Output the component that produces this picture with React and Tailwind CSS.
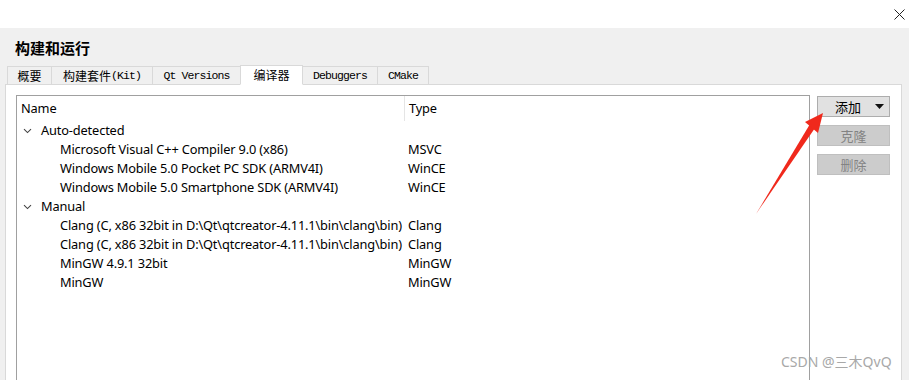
import React from 'react';

const ui = { fontFamily: '"Noto Sans", "Noto Sans CJK SC", sans-serif' };
const cjk = { fontFamily: '"Noto Sans CJK SC", sans-serif' };
const mono = { fontFamily: '"Liberation Mono", "Noto Sans CJK SC", monospace' };

const tabs = [
  { label: [['cjk', '概要']], w: 'w-[45px]' },
  { label: [['cjk', '构建套件'], ['mono', '(Kit)']], w: 'w-[102px]' },
  { label: [['mono', 'Qt Versions']], w: 'w-[89px]' },
  { label: [['cjk', '编译器']], w: 'w-[63px]', active: true },
  { label: [['mono', 'Debuggers']], w: 'w-[76px]' },
  { label: [['mono', 'CMake']], w: 'w-[52px]' },
];

const groups = [
  {
    name: 'Auto-detected',
    items: [
      ['Microsoft Visual C++ Compiler 9.0 (x86)', 'MSVC'],
      ['Windows Mobile 5.0 Pocket PC SDK (ARMV4I)', 'WinCE'],
      ['Windows Mobile 5.0 Smartphone SDK (ARMV4I)', 'WinCE'],
    ],
  },
  {
    name: 'Manual',
    items: [
      ['Clang (C, x86 32bit in D:\\Qt\\qtcreator-4.11.1\\bin\\clang\\bin)', 'Clang'],
      ['Clang (C, x86 32bit in D:\\Qt\\qtcreator-4.11.1\\bin\\clang\\bin)', 'Clang'],
      ['MinGW 4.9.1 32bit', 'MinGW'],
      ['MinGW', 'MinGW'],
    ],
  },
];

function Chevron() {
  return (
    <svg width="9" height="6" viewBox="0 0 9 6" className="shrink-0">
      <path d="M1 1.2 L4.5 4.6 L8 1.2" fill="none" stroke="#444" strokeWidth="1.1" />
    </svg>
  );
}

function Tab({ tab }) {
  const base = 'flex items-center justify-center border border-[#d9d9d9] -ml-px first:ml-0';
  const state = tab.active
    ? 'h-[20px] bg-white border-b-white relative z-10 -mb-px'
    : 'h-[18px] bg-[#f0f0f0] border-b-0';
  return (
    <div className={`${base} ${state} ${tab.w}`}>
      {tab.label.map(([kind, text], i) =>
        kind === 'cjk' ? (
          <span key={i} className="text-[12px] leading-none text-black" style={cjk}>{text}</span>
        ) : (
          <span key={i} className="text-[11.5px] leading-none tracking-[-0.9px] text-black" style={mono}>{text}</span>
        )
      )}
    </div>
  );
}

export default function App() {
  return (
    <div className="relative w-[909px] h-[380px] overflow-hidden bg-white" style={ui}>
      {/* window title bar */}
      <div className="h-[28px] bg-white flex justify-end items-center pr-[4px]">
        <svg width="11" height="11" viewBox="0 0 11 11">
          <path d="M0.5 0.5 L10.5 10.5 M10.5 0.5 L0.5 10.5" stroke="#222" strokeWidth="1" />
        </svg>
      </div>

      <div className="h-[352px] bg-[#f0f0f0] flex flex-col">
        <div className="pl-[15px] pt-[10px] h-[30px] text-[15px] leading-[20px] font-bold text-black" style={cjk}>
          构建和运行
        </div>

        <div className="flex items-end pl-[7px] mt-[7px]">
          {tabs.map((t, i) => (
            <Tab key={i} tab={t} />
          ))}
        </div>

        <div className="flex flex-1 min-h-0">
          <div className="ml-[5px] w-[897px] bg-white border border-b-0 border-[#d9d9d9] flex pl-[10px] pt-[10px]">
            {/* tree view */}
            <div className="w-[794px] border border-b-0 border-[#a0a0a0] bg-white text-[12.8px] tracking-[-0.15px] text-black">
              <div className="flex h-[25px] items-center">
                <div className="w-[387px] pl-[4px] leading-[25px]">Name</div>
                <div className="self-stretch w-px bg-[#e5e5e5]" />
                <div className="pl-[4px] leading-[25px]">Type</div>
              </div>
              {groups.map((g) => (
                <div key={g.name}>
                  <div className="flex items-center h-[19px] pl-[6px] gap-[9px]">
                    <Chevron />
                    <span className="leading-[19px]">{g.name}</span>
                  </div>
                  {g.items.map(([name, type], i) => (
                    <div key={i} className="flex items-center h-[19px]">
                      <div className="w-[391px] shrink-0 pl-[43px] whitespace-nowrap overflow-hidden leading-[19px]">{name}</div>
                      <div className="leading-[19px]">{type}</div>
                    </div>
                  ))}
                </div>
              ))}
            </div>

            {/* buttons */}
            <div className="ml-[7px] w-[73px] flex flex-col gap-[8px] pt-[1px]">
              <div className="h-[21px] bg-[#e1e1e1] border border-[#adadad] flex items-center pl-[17px] pr-[5px]">
                <span className="text-[13px] leading-none text-black" style={cjk}>添加</span>
                <svg width="9" height="5" viewBox="0 0 9 5" className="ml-auto">
                  <path d="M0 0 L9 0 L4.5 5 Z" fill="#111" />
                </svg>
              </div>
              <div className="h-[21px] bg-[#cccccc] border border-[#bfbfbf] flex items-center justify-center">
                <span className="text-[13px] leading-none text-[#838383]" style={cjk}>克隆</span>
              </div>
              <div className="h-[21px] bg-[#cccccc] border border-[#bfbfbf] flex items-center justify-center">
                <span className="text-[13px] leading-none text-[#838383]" style={cjk}>删除</span>
              </div>
            </div>
          </div>
        </div>
      </div>

      {/* red annotation arrow */}
      <svg className="absolute left-0 top-0 pointer-events-none" width="909" height="380" viewBox="0 0 909 380">
        <polygon points="756,214 810,124 815,128" fill="#f0291c" />
        <polygon points="823,113 805,122 818,133" fill="#f0291c" />
      </svg>

      {/* watermark */}
      <div className="absolute left-[781px] top-[353px] text-[14px] leading-[18px] text-[#a8a8a8]">
        CSDN @三木QvQ
      </div>
    </div>
  );
}
